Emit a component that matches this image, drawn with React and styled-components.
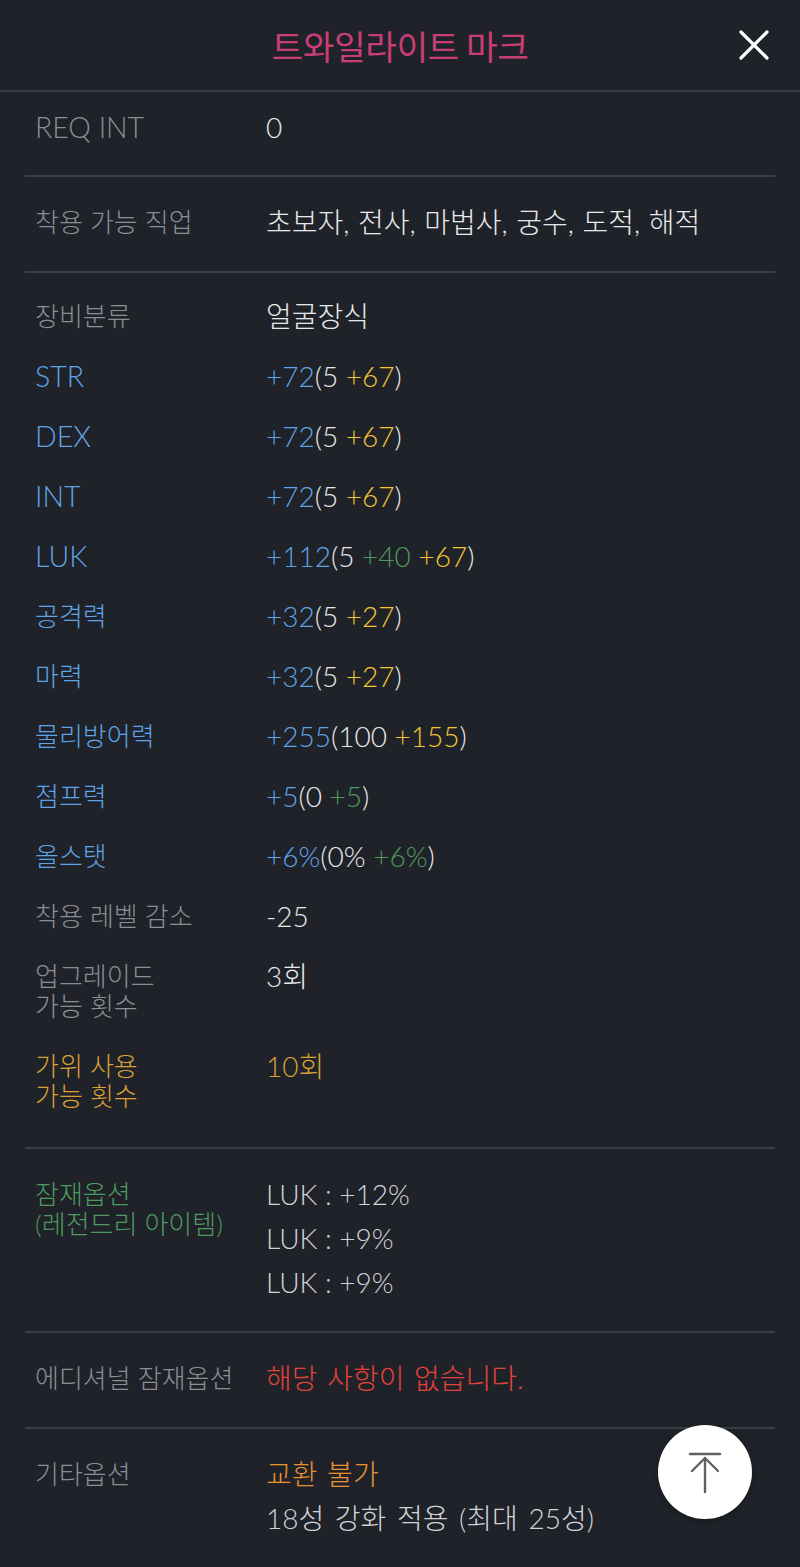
import styled, { createGlobalStyle } from "styled-components";

const GlobalStyle = createGlobalStyle`
  html, body {
    margin: 0;
    padding: 0;
    background: #1f2229;
  }
  body {
    font-family: "Lato", "Noto Sans CJK KR", sans-serif;
    -webkit-font-smoothing: antialiased;
  }
`;

const tones = {
  label: "#8b8e95",
  white: "#e8e9eb",
  soft: "#d2d3d6",
  blue: "#5ea4e6",
  yellow: "#f4c631",
  green: "#4f9a5e",
  gold: "#d9a136",
  orange: "#e8922f",
  red: "#e4433b",
};

const Page = styled.div`
  position: relative;
  width: 800px;
  min-height: 1567px;
  background: #1f2229;
  overflow: hidden;
`;

const Header = styled.header`
  display: grid;
  grid-template-columns: 1fr auto 1fr;
  align-items: center;
  height: 90px;
  padding: 0 30px;
  border-bottom: 2px solid #3a3d45;
  box-sizing: content-box;
`;

const Title = styled.h1`
  grid-column: 2;
  margin: 0;
  font-family: "Noto Sans CJK KR", sans-serif;
  font-size: 34.5px;
  font-weight: 400;
  color: #c93d76;
  letter-spacing: -0.5px;
`;

const CloseButton = styled.button`
  grid-column: 3;
  justify-self: end;
  display: flex;
  padding: 0;
  border: 0;
  background: none;
  cursor: pointer;
`;

const Body = styled.div`
  padding: 0 25px;
`;

const Section = styled.section`
  display: flex;
  flex-direction: column;
  gap: 30px;
  padding: ${(p) => (p.$first ? "20px 0 33px" : p.$tight ? "28px 0 36px" : "30px 0 34px")};
  border-bottom: ${(p) => (p.$last ? "none" : "2px solid #3a3d45")};
`;

const Row = styled.div`
  display: grid;
  grid-template-columns: 231px 1fr;
  padding-left: 10px;
  font-weight: 300;
  line-height: 30px;
`;

const Label = styled.div`
  color: ${(p) => tones[p.$tone || "label"]};
  font-size: ${(p) => (p.$latin ? "28.5px" : "26px")};
  white-space: pre-line;
`;

const Value = styled.div`
  color: ${(p) => tones[p.$tone || "white"]};
  font-size: 28px;
  word-spacing: ${(p) => p.$spacing || "0"};
`;

const Lines = styled.div`
  display: flex;
  flex-direction: column;
  gap: 14px;
  font-size: 28px;
  color: ${(p) => tones[p.$tone || "soft"]};
`;

const Part = styled.span`
  color: ${(p) => (p.$tone ? tones[p.$tone] : "inherit")};
  word-spacing: ${(p) => p.$spacing || "0"};
`;

const TopButton = styled.button`
  position: absolute;
  right: 48px;
  bottom: 48px;
  width: 94px;
  height: 94px;
  border-radius: 50%;
  border: 0;
  background: #ffffff;
  display: flex;
  align-items: center;
  justify-content: center;
  cursor: pointer;
  box-shadow: 0 2px 6px rgba(0, 0, 0, 0.3);
`;

const stats = [
  { label: "STR", total: "+72", parts: [["white", "5"], ["yellow", "+67"]] },
  { label: "DEX", total: "+72", parts: [["white", "5"], ["yellow", "+67"]] },
  { label: "INT", total: "+72", parts: [["white", "5"], ["yellow", "+67"]] },
  {
    label: "LUK",
    total: "+112",
    parts: [["white", "5"], ["green", "+40"], ["yellow", "+67"]],
  },
  { label: "공격력", total: "+32", parts: [["white", "5"], ["yellow", "+27"]] },
  { label: "마력", total: "+32", parts: [["white", "5"], ["yellow", "+27"]] },
  {
    label: "물리방어력",
    total: "+255",
    parts: [["white", "100"], ["yellow", "+155"]],
  },
  { label: "점프력", total: "+5", parts: [["white", "0"], ["green", "+5"]] },
  { label: "올스탯", total: "+6%", parts: [["white", "0%"], ["green", "+6%"]] },
];

const isLatin = (text) => /^[A-Z]+$/.test(text);

const StatValue = ({ total, parts }) => (
  <Value>
    <Part $tone="blue">{total}</Part>
    <Part $tone="white">(</Part>
    {parts.map(([tone, text], i) => (
      <Part key={i} $tone={tone}>
        {i > 0 ? " " : ""}
        {text}
      </Part>
    ))}
    <Part $tone="white">)</Part>
  </Value>
);

const App = () => {
  return (
    <Page>
      <GlobalStyle />
      <Header>
        <Title>트와일라이트 마크</Title>
        <CloseButton aria-label="close">
          <svg width="32" height="32" viewBox="0 0 32 32">
            <path
              d="M3 3 L29 29 M29 3 L3 29"
              stroke="#ffffff"
              strokeWidth="3.2"
              strokeLinecap="round"
            />
          </svg>
        </CloseButton>
      </Header>

      <Body>
        <Section $first>
          <Row>
            <Label $latin>REQ INT</Label>
            <Value>0</Value>
          </Row>
        </Section>

        <Section>
          <Row>
            <Label>착용 가능 직업</Label>
            <Value $spacing="1px">초보자, 전사, 마법사, 궁수, 도적, 해적</Value>
          </Row>
        </Section>

        <Section $tight>
          <Row>
            <Label>장비분류</Label>
            <Value>얼굴장식</Value>
          </Row>
          {stats.map((s) => (
            <Row key={s.label}>
              <Label $tone="blue" $latin={isLatin(s.label)}>
                {s.label}
              </Label>
              <StatValue total={s.total} parts={s.parts} />
            </Row>
          ))}
          <Row>
            <Label>착용 레벨 감소</Label>
            <Value>-25</Value>
          </Row>
          <Row>
            <Label>{"업그레이드\n가능 횟수"}</Label>
            <Value>3회</Value>
          </Row>
          <Row>
            <Label $tone="gold">{"가위 사용\n가능 횟수"}</Label>
            <Value $tone="gold">10회</Value>
          </Row>
        </Section>

        <Section>
          <Row>
            <Label $tone="green">{"잠재옵션\n(레전드리 아이템)"}</Label>
            <Lines>
              <span>LUK : +12%</span>
              <span>LUK : +9%</span>
              <span>LUK : +9%</span>
            </Lines>
          </Row>
        </Section>

        <Section>
          <Row>
            <Label>에디셔널 잠재옵션</Label>
            <Value $tone="red" $spacing="2px">
              해당 사항이 없습니다.
            </Value>
          </Row>
        </Section>

        <Section $last>
          <Row>
            <Label>기타옵션</Label>
            <Lines>
              <Part $tone="orange" $spacing="2px">
                교환 불가
              </Part>
              <Part $spacing="3px">18성 강화 적용 (최대 25성)</Part>
            </Lines>
          </Row>
        </Section>
      </Body>

      <TopButton aria-label="scroll to top">
        <svg width="40" height="44" viewBox="0 0 40 44">
          <path
            d="M5 4 H35 M20 8 V42 M7 21 L20 8 L33 21"
            stroke="#5f6166"
            strokeWidth="2.4"
            fill="none"
            strokeLinecap="round"
            strokeLinejoin="round"
          />
        </svg>
      </TopButton>
    </Page>
  );
};

export default App;
